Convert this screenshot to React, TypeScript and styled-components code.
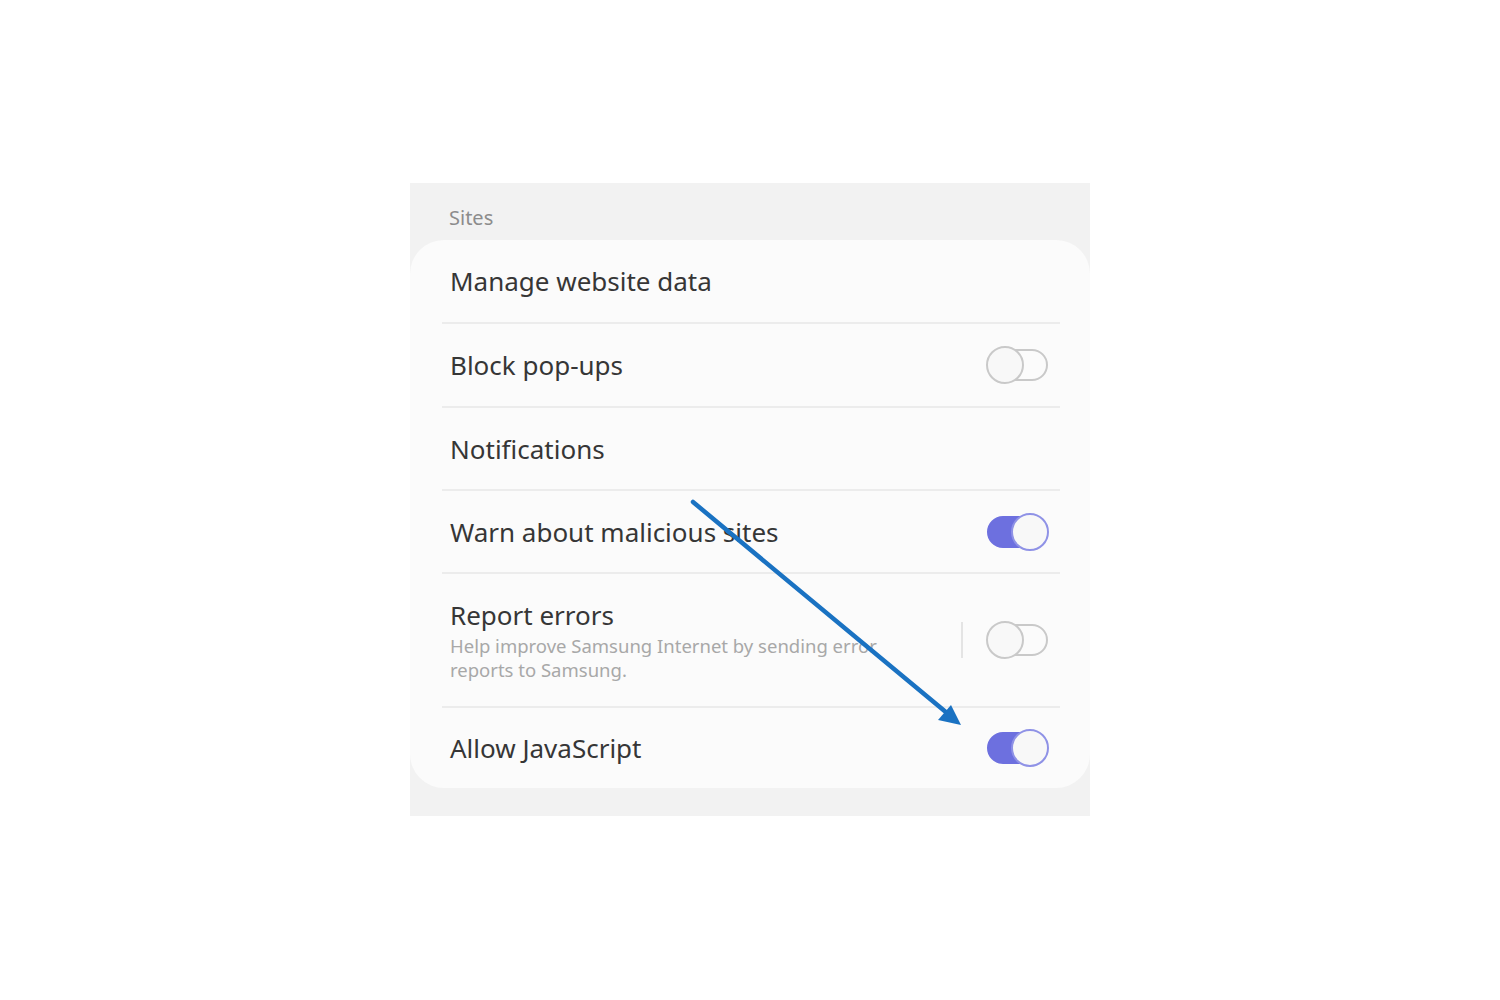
import React from 'react';
import styled, { createGlobalStyle } from 'styled-components';

type Row = {
    title: string;
    height: number;
    subtitle?: string;
    toggle?: boolean;
    on?: boolean;
    separator?: boolean;
};

const rows: Row[] = [
    { title: 'Manage website data', height: 84 },
    { title: 'Block pop-ups', height: 84, toggle: true, on: false },
    { title: 'Notifications', height: 83 },
    { title: 'Warn about malicious sites', height: 83, toggle: true, on: true },
    {
        title: 'Report errors',
        height: 134,
        subtitle: 'Help improve Samsung Internet by sending error reports to Samsung.',
        toggle: true,
        on: false,
        separator: true,
    },
    { title: 'Allow JavaScript', height: 80, toggle: true, on: true },
];

export default function App() {
    return (
        <>
            <GlobalStyle />
            <Panel>
                <SectionLabel>Sites</SectionLabel>
                <Card>
                    {rows.map((row, i) => (
                        <SettingRow key={row.title} h={row.height} last={i === rows.length - 1}>
                            <RowText>
                                <RowTitle>{row.title}</RowTitle>
                                {row.subtitle && <RowSubtitle>{row.subtitle}</RowSubtitle>}
                            </RowText>
                            {row.separator && <VSeparator />}
                            {row.toggle && (
                                <Toggle on={!!row.on}>
                                    <Thumb on={!!row.on} />
                                </Toggle>
                            )}
                        </SettingRow>
                    ))}
                </Card>
                <Arrow width="680" height="633" viewBox="0 0 680 633">
                    <line x1="283" y1="319" x2="537" y2="530" stroke="#1a72c2" strokeWidth="4.5" strokeLinecap="round" />
                    <polygon points="551,542 528,537 541,522" fill="#1a72c2" />
                </Arrow>
            </Panel>
        </>
    );
}

const GlobalStyle = createGlobalStyle`
    body {
        margin: 0;
        background: #fff;
        font-family: 'Noto Sans', 'Open Sans', sans-serif;
    }
`;

const Panel = styled.div`
    position: relative;
    width: 680px;
    height: 633px;
    margin: 183px auto 0;
    background: #f2f2f2;
    box-sizing: border-box;
`;

const SectionLabel = styled.div`
    height: 57px;
    padding: 25px 0 0 39px;
    box-sizing: border-box;
    font-size: 20px;
    color: #8c8c8c;
    line-height: 1;
`;

const Card = styled.div`
    background: #fbfbfb;
    border-radius: 34px;
    padding: 0 30px 0 32px;
`;

const SettingRow = styled.div<{ h: number; last: boolean }>`
    display: flex;
    align-items: center;
    height: ${(p) => p.h}px;
    padding: 0 12px 0 8px;
    border-bottom: ${(p) => (p.last ? 'none' : '2px solid #ececec')};
    box-sizing: border-box;
`;

const RowText = styled.div`
    flex: 1;
    display: flex;
    flex-direction: column;
    padding-right: 60px;
`;

const RowTitle = styled.div`
    font-size: 26px;
    color: #363636;
    line-height: 32px;
`;

const RowSubtitle = styled.div`
    font-size: 18.5px;
    color: #a8a8a8;
    line-height: 24px;
    margin-top: 3px;
`;

const VSeparator = styled.div`
    width: 2px;
    height: 36px;
    background: #e4e4e4;
    margin-right: 24px;
`;

const Toggle = styled.div<{ on: boolean }>`
    position: relative;
    width: 61px;
    height: 32px;
    border-radius: 16px;
    box-sizing: border-box;
    background: ${(p) => (p.on ? '#6d70df' : 'transparent')};
    border: 2px solid ${(p) => (p.on ? '#6d70df' : '#c9c9c9')};
`;

const Thumb = styled.div<{ on: boolean }>`
    position: absolute;
    top: -5px;
    ${(p) => (p.on ? 'right: -3px;' : 'left: -3px;')}
    width: 38px;
    height: 38px;
    border-radius: 50%;
    box-sizing: border-box;
    background: #f8f8f8;
    border: 2px solid ${(p) => (p.on ? '#8f92e6' : '#c9c9c9')};
`;

const Arrow = styled.svg`
    position: absolute;
    left: 0;
    top: 0;
    pointer-events: none;
`;
